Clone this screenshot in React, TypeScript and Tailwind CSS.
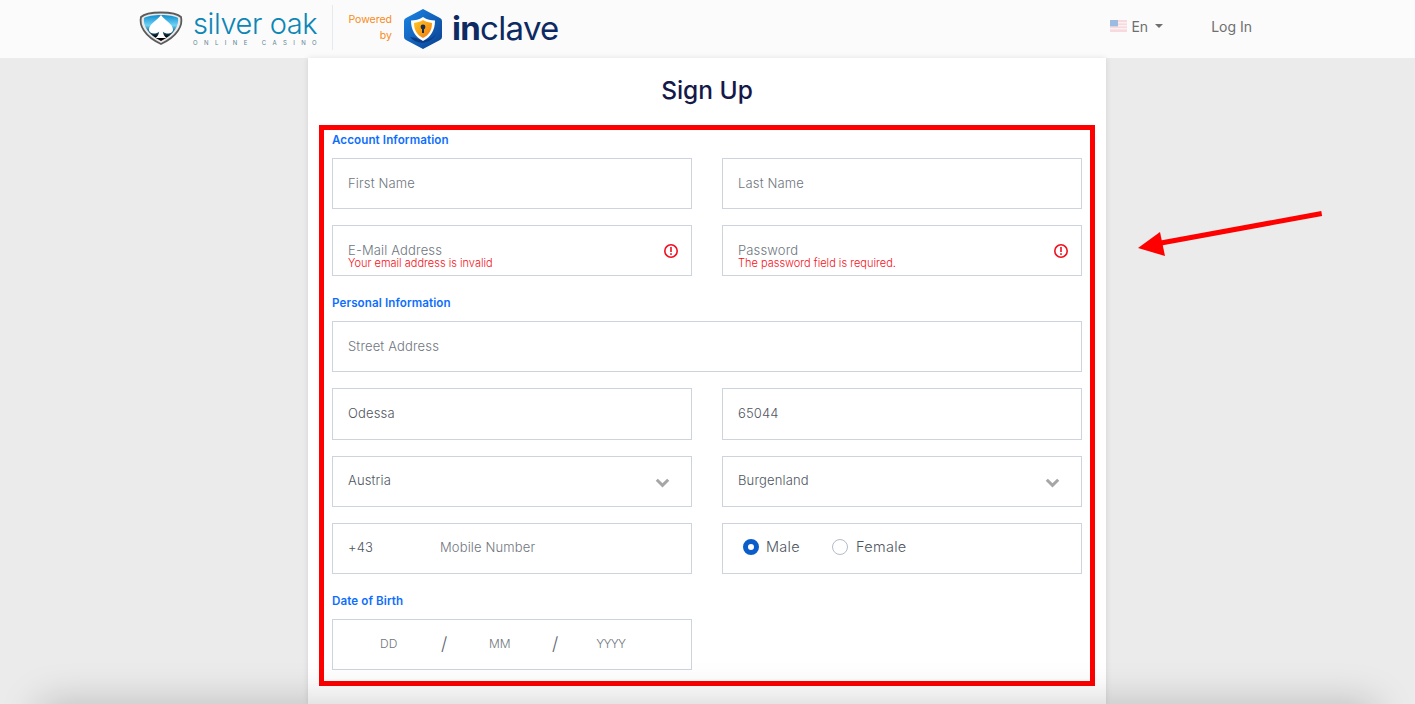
import React from "react";

const fontFamily = { fontFamily: 'Inter, "Noto Sans", sans-serif' };

function SilverLogo() {
  return (
    <svg width="46" height="38" viewBox="0 0 46 38" className="shrink-0">
      <defs>
        <linearGradient id="sb" x1="0" y1="0" x2="0" y2="1">
          <stop offset="0" stopColor="#0f8fd0" />
          <stop offset="0.4" stopColor="#6fd2f5" />
          <stop offset="0.66" stopColor="#145a7c" />
          <stop offset="0.85" stopColor="#000" />
          <stop offset="1" stopColor="#000" />
        </linearGradient>
      </defs>
      <path d="M3 8 C9 2 37 2 43 8 C45 16 40 27 23 35 C6 27 1 16 3 8Z" fill="#e9e9e9" stroke="#5b5b5b" strokeWidth="1.8" />
      <path d="M6 9 C12 5 34 5 40 9 C41 16 37 25 23 32 C9 25 5 16 6 9Z" fill="url(#sb)" />
      <path d="M23 6 C26 11 35 15 35 20.5 C35 25 28 26 24.8 22.5 C25 25 26.5 27.5 28.5 29 L17.5 29 C19.5 27.5 21 25 21.2 22.5 C18 26 11 25 11 20.5 C11 15 20 11 23 6Z" fill="#fff" />
    </svg>
  );
}

function ShieldHex() {
  return (
    <svg width="38" height="40" viewBox="0 0 38 40" className="shrink-0">
      <defs>
        <linearGradient id="hx" x1="0" y1="0" x2="1" y2="1">
          <stop offset="0" stopColor="#1b86e8" />
          <stop offset="1" stopColor="#0a3f8f" />
        </linearGradient>
        <linearGradient id="sh" x1="0" y1="0" x2="1" y2="1">
          <stop offset="0" stopColor="#ffc81e" />
          <stop offset="1" stopColor="#f07a12" />
        </linearGradient>
      </defs>
      <path d="M19 0 L36 9 Q38 10 38 12 L38 28 Q38 30 36 31 L19 40 L2 31 Q0 30 0 28 L0 12 Q0 10 2 9Z" fill="url(#hx)" />
      <path d="M6 28 C14 38 30 34 33 22 C31 30 20 34 12 29Z" fill="#0b3a86" />
      <path d="M19 8 C23 11 27 11 31 11.5 C31 21 27 28 19 32 C11 28 7 21 7 11.5 C11 11 15 11 19 8Z" fill="#fff" />
      <path d="M19 11 C22 13 25 13.5 28 14 C28 21 25 26 19 29 C13 26 10 21 10 14 C13 13.5 16 13 19 11Z" fill="url(#sh)" />
      <circle cx="19" cy="18" r="2.4" fill="#1a2a4a" />
      <rect x="18" y="18" width="2" height="6" fill="#1a2a4a" />
    </svg>
  );
}

function Flag() {
  return (
    <svg width="17" height="12" viewBox="0 0 17 12" className="shrink-0 opacity-50">
      <rect width="17" height="12" fill="#f7b9c0" />
      <rect y="2" width="17" height="1.4" fill="#fde9ea" />
      <rect y="5" width="17" height="1.4" fill="#fde9ea" />
      <rect y="8" width="17" height="1.4" fill="#fde9ea" />
      <rect width="8" height="6.4" fill="#3f7cc9" />
    </svg>
  );
}

const boxClass = "h-[51px] border border-[#ced4de] bg-white";

function Field({ placeholder, value, error }: { placeholder?: string; value?: string; error?: string }) {
  return (
    <div className={`${boxClass} flex items-center pl-[15px] pr-3 ${error ? "" : "pb-[2px]"}`}>
      <div className="flex min-w-0 flex-1 flex-col">
        <input
          readOnly
          placeholder={placeholder}
          defaultValue={value}
          className={`w-full bg-transparent text-[13px] font-light leading-[16px] tracking-[0.15px] text-[#4f5661] outline-none placeholder:text-[#6f7680] ${error ? "mt-[10px]" : ""}`}
        />
        {error && <span className="text-[11px] font-light leading-[11px] text-[#f50f20]">{error}</span>}
      </div>
      {error && (
        <svg width="16" height="16" viewBox="0 0 16 16" className="shrink-0">
          <circle cx="8" cy="8" r="6.2" fill="none" stroke="#f01020" strokeWidth="1.6" />
          <rect x="7.2" y="4" width="1.6" height="5" fill="#f01020" />
          <rect x="7.2" y="10.2" width="1.6" height="1.7" fill="#f01020" />
        </svg>
      )}
    </div>
  );
}

function SelectBox({ value }: { value: string }) {
  return (
    <div className={`${boxClass} flex items-center justify-between pb-[3px] pl-[15px] pr-[21px]`}>
      <span className="text-[13px] font-light leading-[16px] tracking-[0.15px] text-[#4f5661]">{value}</span>
      <svg width="15" height="10" viewBox="0 0 15 10" className="mt-[5px]">
        <path d="M1.8 1.8 L7.5 7.4 L13.2 1.8" fill="none" stroke="#a6a6a6" strokeWidth="3" />
      </svg>
    </div>
  );
}

function Heading({ children, className = "" }: { children: React.ReactNode; className?: string }) {
  return <div className={`text-[11.6px] font-semibold leading-[16px] tracking-[0.1px] text-[#0d6efd] ${className}`}>{children}</div>;
}

export default function App() {
  return (
    <div className="relative flex h-[704px] flex-col overflow-hidden bg-[#ebebeb]" style={fontFamily}>
      <header className="flex h-[58px] shrink-0 items-center justify-between bg-[#fbfbfb] pl-[140px] pr-[163px]">
        <div className="flex items-center">
          <div className="-ml-[2px] flex items-center pb-[2px]">
            <SilverLogo />
          </div>
          <div className="ml-[9px] flex w-[125px] flex-col pb-[3px]">
            <span className="whitespace-nowrap text-[29px] font-light leading-[30px] tracking-[-0.4px] text-[#0c86b6]">silver oak</span>
            <span className="whitespace-nowrap text-[6px] leading-[8px] tracking-[6.4px] text-[#5d8494]">ONLINE CASINO</span>
          </div>
          <div className="mb-[3px] ml-[14px] h-[45px] w-px bg-[#e6eaef]" />
          <div className="ml-[13px] flex w-[46px] flex-col items-end pb-[2px] text-[10.5px] leading-[16px] text-[#f98a17]">
            <span>Powered</span>
            <span>by</span>
          </div>
          <div className="ml-[12px] pb-[1px]">
            <ShieldHex />
          </div>
          <div className="ml-[10px] pb-[3px] text-[33px] leading-[38px] tracking-[-0.7px] text-[#0d2a63]">
            <span className="font-bold">in</span>
            <span className="font-normal">clave</span>
          </div>
        </div>
        <div className="flex items-center pb-[6px] text-[14px] text-[#6f6f6f]">
          <Flag />
          <span className="ml-[4px]">En</span>
          <span className="ml-[7px] h-0 w-0 border-x-[4px] border-t-[4px] border-x-transparent border-t-[#6f6f6f]" />
          <span className="ml-[48px]">Log In</span>
        </div>
      </header>

      <div className="flex shrink-0 justify-center pr-px">
        <main className="h-[646px] w-[798px] bg-white px-[11px] shadow-[0_0_6px_rgba(0,0,0,0.1)]">
          <h1 className="flex h-[67px] items-center justify-center pb-[3px] text-[24.5px] font-medium text-[#15194a]">Sign Up</h1>
          <section className="h-[561px] border-[5px] border-[#fe0000] px-2 pt-[2px]">
            <Heading className="mb-[10px]">Account Information</Heading>
            <div className="grid grid-cols-2 gap-x-[30px] gap-y-4">
              <Field placeholder="First Name" />
              <Field placeholder="Last Name" />
              <Field placeholder="E-Mail Address" error="Your email address is invalid" />
              <Field placeholder="Password" error="The password field is required." />
            </div>
            <Heading className="mb-[10px] mt-[19px]">Personal Information</Heading>
            <div className="grid grid-cols-2 gap-x-[30px] gap-y-4">
              <div className="col-span-2">
                <Field placeholder="Street Address" />
              </div>
              <div className="h-[52px] [&>div]:h-[52px]">
                <Field value="Odessa" />
              </div>
              <div className="h-[52px] [&>div]:h-[52px]">
                <Field value="65044" />
              </div>
              <SelectBox value="Austria" />
              <SelectBox value="Burgenland" />
              <div className={`${boxClass} flex items-center pb-[2px] pl-[15px] text-[13px] font-light tracking-[0.15px]`}>
                <span className="w-[92px] text-[#4f5661]">+43</span>
                <span className="text-[#6f7680]">Mobile Number</span>
              </div>
              <div className={`${boxClass} flex items-center pb-[3px] pl-5 text-[14.5px] font-light tracking-[0.3px] text-[#4f5661]`}>
                <span className="h-4 w-4 rounded-full border-[5px] border-[#0b5ec9] bg-white" />
                <span className="ml-[7px] w-[34px]">Male</span>
                <span className="ml-[32px] h-4 w-4 rounded-full border border-[#b4bcc8] bg-white" />
                <span className="ml-2">Female</span>
              </div>
            </div>
            <Heading className="mb-[10px] mt-[19px]">Date of Birth</Heading>
            <div className="grid grid-cols-2 gap-x-[30px]">
              <div className={`${boxClass} flex items-center pb-[2px] pl-[28px] text-[12px] font-light text-[#6f7680]`}>
                <span className="w-[55.5px] text-center">DD</span>
                <span className="w-[55.5px] text-center text-[18px] font-light text-[#5f6670]">/</span>
                <span className="w-[55.5px] text-center">MM</span>
                <span className="w-[55.5px] text-center text-[18px] font-light text-[#5f6670]">/</span>
                <span className="w-[55.5px] text-center tracking-[-0.8px]">YYYY</span>
              </div>
            </div>
          </section>
        </main>
      </div>

      <footer className="relative z-10 mx-auto h-10 w-[1335px] shrink-0 bg-[#d5d5d5] shadow-[0_0_40px_rgba(0,0,0,0.22)]" />

      <svg width="190" height="50" viewBox="0 0 190 50" className="absolute left-[1135px] top-[210px]">
        <path d="M186.7 3.5 L26 33" fill="none" stroke="#fe0000" strokeWidth="5" />
        <path d="M3 38 L25 22 L30 46Z" fill="#fe0000" />
      </svg>
    </div>
  );
}
